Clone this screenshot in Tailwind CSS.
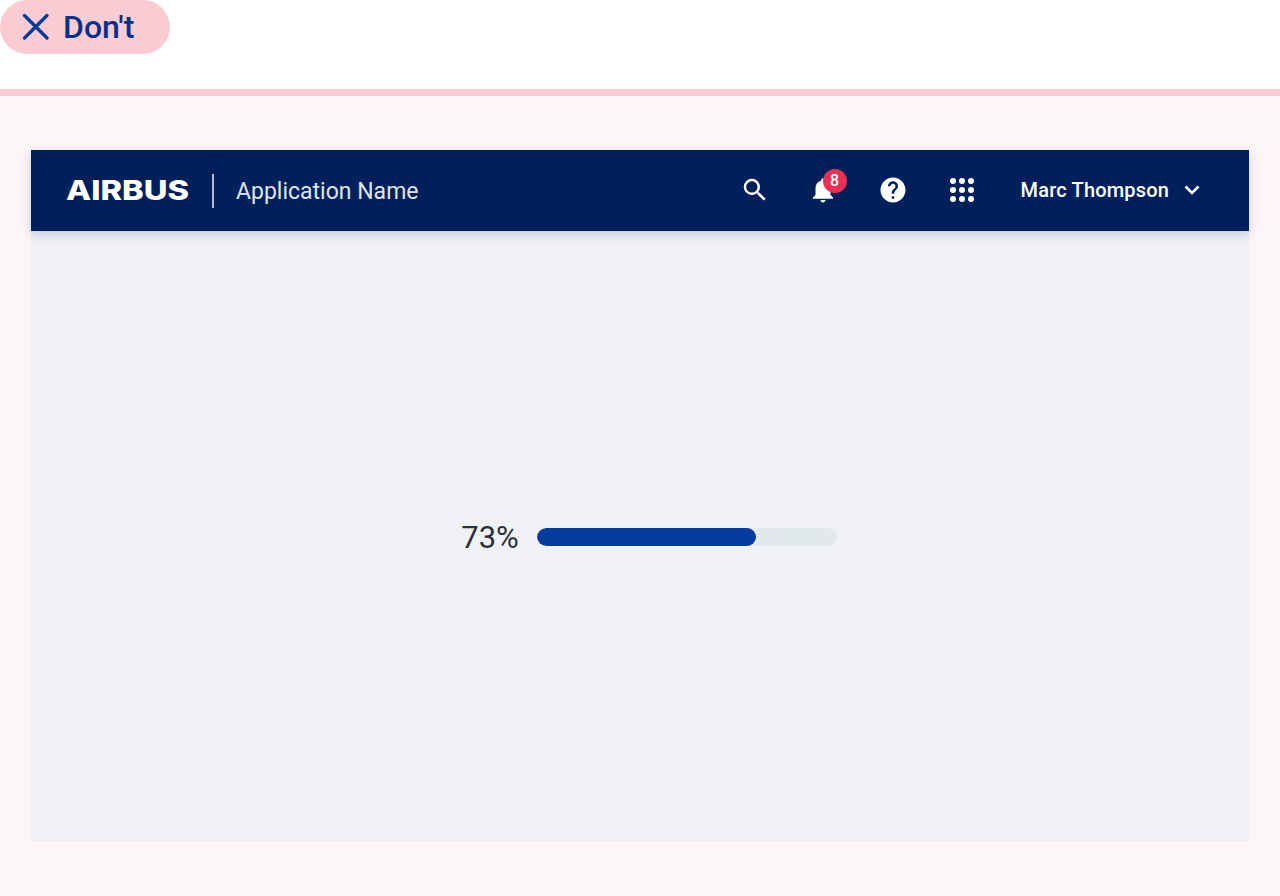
<!DOCTYPE html>
<html lang="en">
<head>
  <meta charset="UTF-8" />
  <title>Don't</title>
  <script src="https://cdn.jsdelivr.net/npm/@tailwindcss/browser@4"></script>
</head>
<body class="bg-white font-['Roboto',sans-serif] h-[896px] overflow-hidden flex flex-col">
  <!-- Label -->
  <div class="h-[89px] shrink-0">
    <div class="w-[170px] h-[54px] rounded-[27px] bg-[#f9ccd4] flex items-center pl-[20px] gap-[11px]">
      <svg width="32" height="32" viewBox="0 0 32 32" fill="none" stroke="#063b9e" stroke-width="3.4" stroke-linecap="round"><path d="M4.5 4.5 L27 27 M27 4.5 L4.5 27"/></svg>
      <span class="text-[32px] font-medium leading-none text-[#08308a]">Don't</span>
    </div>
  </div>

  <div class="flex-1 border-t-[7px] border-[#f9ccd4] bg-[#fdf6f7] pt-[54px] px-[31px]">
    <div class="h-[691px] bg-[#eff1f5] flex flex-col">
      <!-- Header -->
      <header class="h-[81px] shrink-0 bg-[#00205b] shadow-[0_4px_10px_rgba(0,32,91,0.18)] flex items-center pl-[35px] text-white">
        <span class="font-['Inter',sans-serif] font-extrabold text-[27px] leading-none w-[124px] origin-left scale-x-[1.21] whitespace-nowrap">AIRBUS</span>
        <div class="w-[2px] h-[34px] bg-white/70 ml-[22px] mr-[22px]"></div>
        <span class="text-[23px] leading-none text-[#dfe5f0] pt-[2px]">Application Name</span>

        <div class="ml-auto flex items-center">
          <svg class="-mt-[2px]" width="30" height="30" viewBox="0 0 24 24" fill="white"><path d="M15.5 14h-.79l-.28-.27A6.47 6.47 0 0 0 16 9.5 6.5 6.5 0 1 0 9.5 16c1.61 0 3.09-.59 4.23-1.57l.27.28v.79l5 4.99L20.49 19l-4.99-5zm-6 0C7.01 14 5 11.99 5 9.5S7.01 5 9.5 5 14 7.01 14 9.5 11.99 14 9.5 14z"/></svg>
          <div class="relative ml-[38px] mr-[1px] w-[30px] h-[30px] -mt-[2px]">
            <svg width="30" height="30" viewBox="0 0 24 24" fill="white"><path d="M12 22c1.1 0 2-.9 2-2h-4c0 1.1.89 2 2 2zm6-6v-5c0-3.07-1.64-5.64-4.5-6.32V4c0-.83-.67-1.5-1.5-1.5s-1.5.67-1.5 1.5v.68C7.63 5.36 6 7.92 6 11v5l-2 2v1h16v-1l-2-2z"/></svg>
            <span class="absolute left-[15px] top-[-6px] w-[24px] h-[24px] rounded-full bg-[#ec2f54] text-white text-[16px] font-medium leading-[24px] text-center">8</span>
          </div>
          <svg class="ml-[39px] -mt-[2px]" width="30" height="30" viewBox="0 0 24 24" fill="white"><path d="M12 2C6.48 2 2 6.48 2 12s4.48 10 10 10 10-4.48 10-10S17.52 2 12 2zm1 17h-2v-2h2v2zm2.07-7.75-.9.92C13.45 12.9 13 13.5 13 15h-2v-.5c0-1.1.45-2.1 1.17-2.83l1.24-1.26c.37-.36.59-.86.59-1.41 0-1.1-.9-2-2-2s-2 .9-2 2H8c0-2.21 1.79-4 4-4s4 1.79 4 4c0 .88-.36 1.68-.93 2.25z"/></svg>
          <div class="ml-[39px] w-[30px] h-[30px] grid grid-cols-3 gap-[3px] p-[3px] -mt-[2px]">
            <span class="rounded-full bg-white"></span><span class="rounded-full bg-white"></span><span class="rounded-full bg-white"></span>
            <span class="rounded-full bg-white"></span><span class="rounded-full bg-white"></span><span class="rounded-full bg-white"></span>
            <span class="rounded-full bg-white"></span><span class="rounded-full bg-white"></span><span class="rounded-full bg-white"></span>
          </div>
          <span class="ml-[44px] text-[20px] font-medium leading-none tracking-[0.17px] whitespace-nowrap -mt-[2px]">Marc Thompson</span>
          <svg class="ml-[8px] mr-[42px] -mt-[2px]" width="30" height="30" viewBox="0 0 30 30" fill="none" stroke="white" stroke-width="2.6"><path d="M8.5 11.5 15 18l6.5-6.5"/></svg>
        </div>
      </header>

      <!-- Progress -->
      <div class="flex-1 flex items-center justify-center pt-[2px]">
        <div class="flex items-center gap-[18px] ml-[18px]">
          <span class="text-[31px] leading-none text-[#2b3038]">73%</span>
          <div class="w-[300px] h-[18px] rounded-full bg-[#e2e9ec] overflow-hidden">
            <div class="h-full rounded-full bg-[#063b9e]" style="width:73%"></div>
          </div>
        </div>
      </div>
    </div>
  </div>
</body>
</html>
